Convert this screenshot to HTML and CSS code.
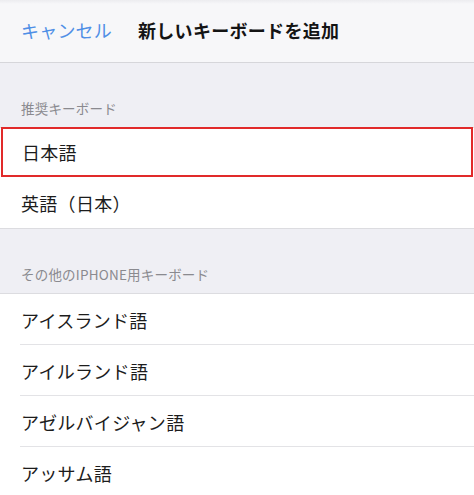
FILE: index.html
```html
<!DOCTYPE html>
<html lang="ja">
<head>
<meta charset="utf-8">
<link rel="stylesheet" href="styles.css">
</head>
<body>
<div class="screen">
  <header class="navbar">
    <span class="cancel">キャンセル</span>
    <span class="title">新しいキーボードを追加</span>
  </header>
  <div class="section-head">推奨キーボード</div>
  <ul class="group">
    <li class="row selected">日本語</li>
    <li class="row">英語（日本）</li>
  </ul>
  <div class="section-head">その他のIPHONE用キーボード</div>
  <ul class="group">
    <li class="row">アイスランド語</li>
    <li class="row">アイルランド語</li>
    <li class="row">アゼルバイジャン語</li>
    <li class="row">アッサム語</li>
  </ul>
</div>
</body>
</html>
```

FILE: styles.css
```css
* { box-sizing: border-box; }
html, body {
  margin: 0;
  padding: 0;
  background: #efeff4;
}
body {
  font-family: "Noto Sans CJK JP", "Noto Sans", sans-serif;
  width: 474px;
  height: 495px;
  overflow: hidden;
}
.navbar {
  height: 63px;
  background: linear-gradient(#ececef 0, #f7f7f9 4px, #f7f7f9 100%);
  border-bottom: 1px solid #d6d6da;
  display: flex;
  align-items: center;
  padding: 0 0 2px 21px;
  gap: 26px;
}
.cancel {
  color: #4f8fe6;
  font-size: 18px;
  letter-spacing: 0.2px;
}
.title {
  color: #141414;
  font-size: 18px;
  font-weight: 700;
  letter-spacing: 0.3px;
}
.section-head {
  height: 64px;
  display: flex;
  align-items: flex-end;
  padding: 0 0 9px 21px;
  color: #8a8a8f;
  font-size: 13.5px;
  letter-spacing: 0.2px;
}
.group {
  list-style: none;
  margin: 0;
  padding: 0;
  background: #fff;
  border-top: 1px solid #dcdce0;
  border-bottom: 1px solid #dcdce0;
}
.row {
  height: 51px;
  display: flex;
  align-items: center;
  padding: 0 0 0 21px;
  color: #1c1c1c;
  font-size: 18px;
  letter-spacing: 0.3px;
  position: relative;
}
.row + .row::before {
  content: "";
  position: absolute;
  top: -1px;
  left: 20px;
  right: 0;
  height: 1px;
  background: #e3e3e6;
}
.row.selected {
  height: 50px;
  border: 2px solid #e12a2a;
  margin: -1px 1px 0 1px;
  padding-left: 19px;
}
.row.selected + .row::before { display: none; }
```
